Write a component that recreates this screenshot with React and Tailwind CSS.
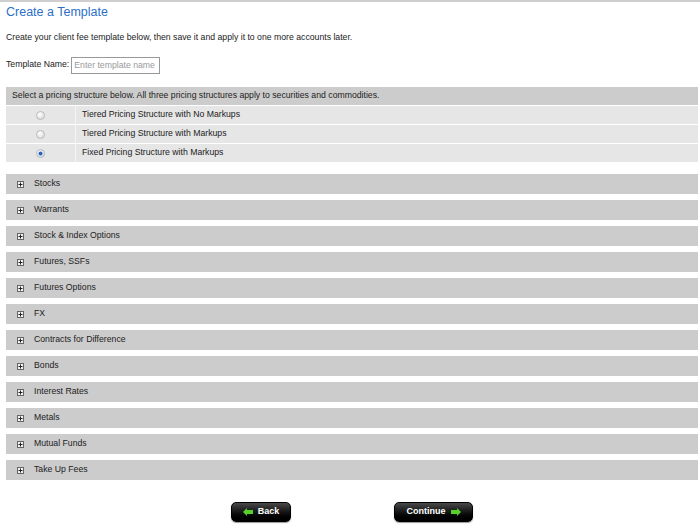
import React from 'react';

const sections = [
  'Stocks', 'Warrants', 'Stock & Index Options', 'Futures, SSFs', 'Futures Options', 'FX',
  'Contracts for Difference', 'Bonds', 'Interest Rates', 'Metals', 'Mutual Funds', 'Take Up Fees',
];

const structures = [
  { label: 'Tiered Pricing Structure with No Markups', checked: false },
  { label: 'Tiered Pricing Structure with Markups', checked: false },
  { label: 'Fixed Pricing Structure with Markups', checked: true },
];

const Radio = ({ checked }) => (
  <svg width="9" height="9" viewBox="0 0 9 9">
    <defs>
      <radialGradient id={checked ? 'rOn' : 'rOff'} cx="0.4" cy="0.35" r="0.7">
        <stop offset="0" stopColor="#ffffff" />
        <stop offset="1" stopColor={checked ? '#c9d6e6' : '#d9d9d9'} />
      </radialGradient>
    </defs>
    <circle cx="4.5" cy="4.5" r="4" fill={`url(#${checked ? 'rOn' : 'rOff'})`} stroke="#b0b0b0" strokeWidth="0.8" />
    {checked && <circle cx="4.5" cy="4.5" r="2" fill="#2f64b3" />}
  </svg>
);

const PlusBox = () => (
  <svg width="7" height="7" viewBox="0 0 7 7">
    <rect x="0.5" y="0.5" width="6" height="6" fill="#f2f2f2" stroke="#666" strokeWidth="1" />
    <path d="M1.5 3.5h4M3.5 1.5v4" stroke="#222" strokeWidth="1" />
  </svg>
);

const Arrow = ({ dir }) => (
  <svg width="10" height="8" viewBox="0 0 10 8">
    {dir === 'left'
      ? <path d="M0 4L4 0v2h6v4H4v2z" fill="#56d12a" />
      : <path d="M10 4L6 0v2H0v4h6v2z" fill="#56d12a" />}
  </svg>
);

const NavButton = ({ children, width }) => (
  <button
    className={`${width} h-[20px] rounded-[5px] border border-black bg-gradient-to-b from-[#4a4a4a] via-[#151515] to-[#000] text-white text-[9px] font-bold flex items-center justify-center gap-[5px] shadow-[0_1px_1px_rgba(0,0,0,0.4)]`}
  >
    {children}
  </button>
);

export default function App() {
  return (
    <div className="w-[700px] h-[528px] bg-white border-t-2 border-[#cfcfcf] font-['Liberation_Sans',Arial,sans-serif] text-[#222] overflow-hidden">
      <div className="pl-[6px] pr-[2px]">
        <h1 className="pt-[2px] text-[12.5px] leading-[16px] text-[#2b70c8]">Create a Template</h1>
        <p className="mt-[11px] text-[8.7px] leading-[12px]">
          Create your client fee template below, then save it and apply it to one more accounts later.
        </p>
        <div className="mt-[14px] flex items-center h-[16px] text-[8.7px]">
          <span>Template Name:</span>
          <input
            className="ml-[2px] w-[89px] h-[17px] border border-[#999] px-[2px] text-[8.7px] outline-none placeholder:text-[#999]"
            placeholder="Enter template name"
          />
        </div>

        <div className="mt-[14px] text-[8.7px]">
          <div className="h-[18px] bg-[#cccccc] flex items-center pl-[6px]">
            Select a pricing structure below. All three pricing structures apply to securities and commodities.
          </div>
          {structures.map((s) => (
            <div key={s.label} className="mt-px h-[18px] bg-[#e6e6e6] flex">
              <div className="w-[70px] flex items-center justify-center border-r border-[#f4f4f4]">
                <Radio checked={s.checked} />
              </div>
              <div className="flex items-center pl-[6px]">{s.label}</div>
            </div>
          ))}
        </div>

        <div className="mt-[12px] flex flex-col gap-[6px] text-[8.7px]">
          {sections.map((name) => (
            <div key={name} className="h-[20px] bg-[#cccccc] flex items-center">
              <div className="w-[28px] flex justify-end pr-[10px]">
                <PlusBox />
              </div>
              <span>{name}</span>
            </div>
          ))}
        </div>

        <div className="mt-[22px] flex justify-center gap-[103px]">
          <NavButton width="w-[60px]">
            <Arrow dir="left" />
            <span>Back</span>
          </NavButton>
          <NavButton width="w-[79px]">
            <span>Continue</span>
            <Arrow dir="right" />
          </NavButton>
        </div>
      </div>
    </div>
  );
}
